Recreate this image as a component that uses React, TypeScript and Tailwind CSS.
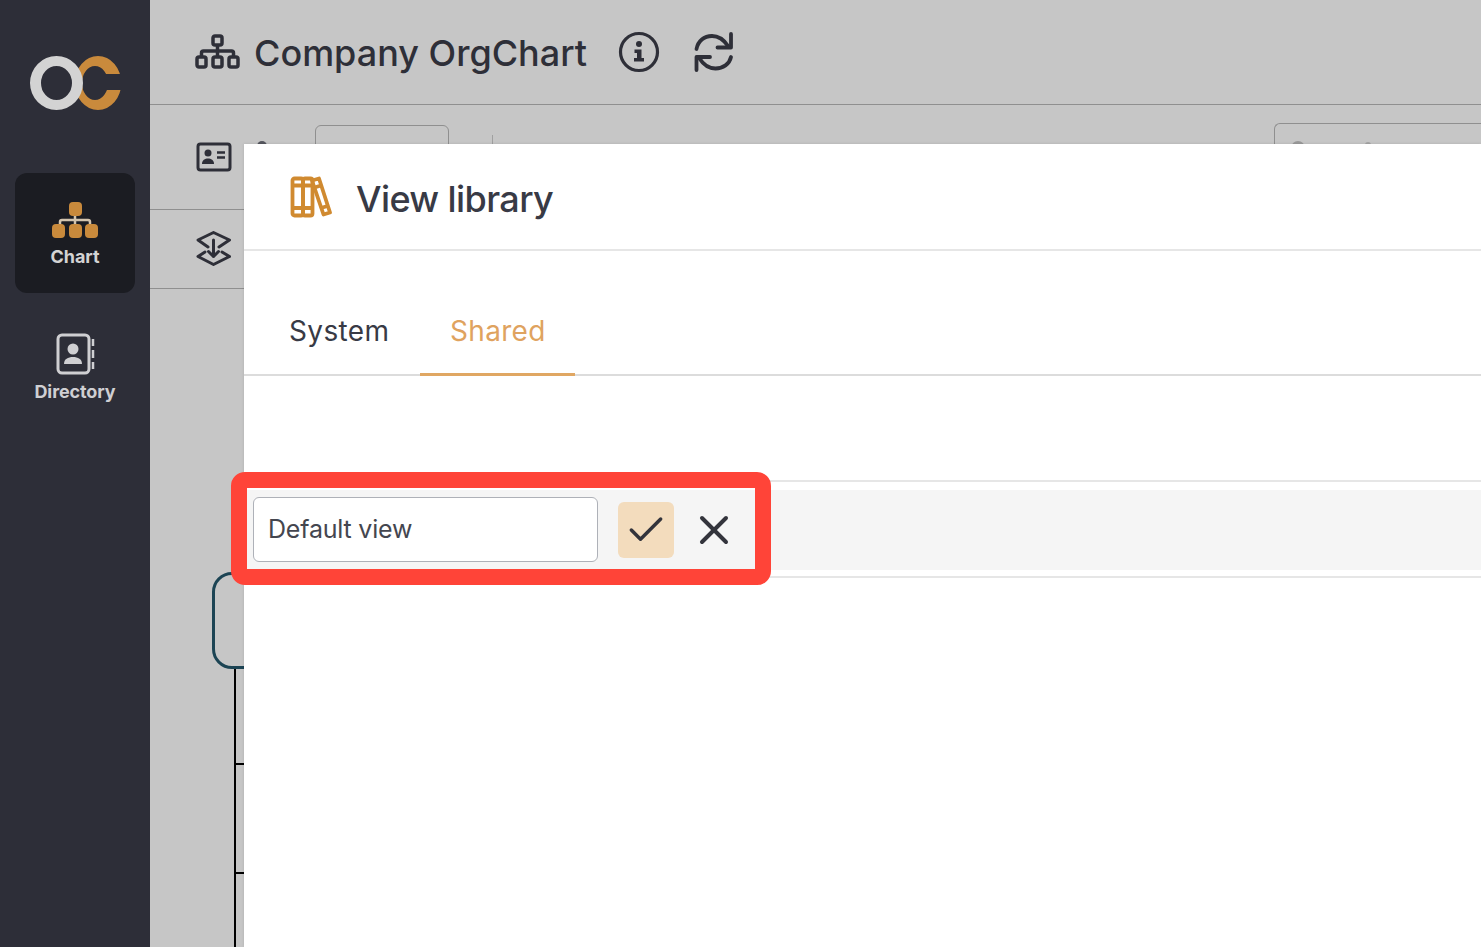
import { Check, X } from 'lucide-react';

// Logo: two ring shapes, drawn by hand
function Logo() {
  return (
    <svg width="92" height="56" viewBox="0 0 92 56" className="block">
      <clipPath id="c-cut">
        <path d="M0 0H92V19H70V35H92V56H0Z" />
      </clipPath>
      <path
        d="M45.700 28A23.300 27 0 1 0 92.300 28A23.300 27 0 1 0 45.700 28ZM53 28A13 17 0 1 1 79 28A13 17 0 1 1 53 28Z"
        fill="#c98a3c"
        fillRule="evenodd"
        clipPath="url(#c-cut)"
      />
      <path
        d="M1 28A26.500 27 0 1 0 54 28A26.500 27 0 1 0 1 28ZM12 28A15.500 17 0 1 1 43 28A15.500 17 0 1 1 12 28Z"
        fill="#d3d3d3"
        fillRule="evenodd"
      />
    </svg>
  );
}

function ChartSolid() {
  return (
    <svg width="46" height="36" viewBox="0 0 46 36" className="block">
      <path d="M23 12V26M8 25V20Q8 18 10 18H36Q38 18 38 20V25" fill="none" stroke="#d3c4ae" strokeWidth="2.5" />
      <rect x="17" y="0" width="13" height="14" rx="4" fill="#c98a3c" />
      <rect x="0" y="22" width="13" height="14" rx="4" fill="#c98a3c" />
      <rect x="17" y="22" width="13" height="14" rx="4" fill="#c98a3c" />
      <rect x="33" y="22" width="13" height="14" rx="4" fill="#c98a3c" />
    </svg>
  );
}

function DirectoryIcon() {
  return (
    <svg width="40" height="42" viewBox="0 0 40 42" className="block">
      <rect x="3" y="2" width="31" height="38" rx="4" fill="none" stroke="#cfcfd2" strokeWidth="3" />
      <circle cx="18" cy="16" r="5.5" fill="#cfcfd2" />
      <path d="M9 31C9 26 13 24 18 24C23 24 27 26 27 31Z" fill="#cfcfd2" />
      <path d="M38 6V13M38 17V25M38 29V36" stroke="#cfcfd2" strokeWidth="2.5" />
    </svg>
  );
}

function SitemapIcon() {
  return (
    <svg width="46" height="36" viewBox="0 0 46 36" className="block" fill="none" stroke="#2e2f38" strokeWidth="3.5">
      <rect x="18" y="2" width="9" height="9" rx="2" />
      <rect x="2" y="23" width="9" height="10" rx="2" />
      <rect x="18" y="23" width="9" height="10" rx="2" />
      <rect x="34" y="23" width="9" height="10" rx="2" />
      <path d="M22.500 11V23M6.500 23V19Q6.500 17 8.500 17H36.500Q38.500 17 38.500 19V23" />
    </svg>
  );
}

function InfoIcon() {
  return (
    <svg width="42" height="42" viewBox="0 0 42 42" className="block">
      <circle cx="21" cy="21" r="18.500" fill="none" stroke="#2e2f38" strokeWidth="3.200" />
      <circle cx="21" cy="13" r="3" fill="#2e2f38" />
      <path d="M16.500 18.500H23.500V27H26V30.500H16V27H19V22H16.500Z" fill="#2e2f38" />
    </svg>
  );
}

function RefreshIcon() {
  return (
    <svg width="40" height="40" viewBox="0 0 40 40" className="block" fill="none" stroke="#2e2f38" strokeWidth="3.800" strokeLinecap="round" strokeLinejoin="round">
      <path d="M2.500 17C4 9 10 4 18 4C25 4 30 8 34 14" />
      <path d="M37 2V15.500H23.500" />
      <path d="M37 25C35.500 32 29 36.500 21.500 36.500C14 36.500 9 32 5.500 26.500" />
      <path d="M2.500 38V25H16" />
    </svg>
  );
}

function IdCardIcon() {
  return (
    <svg width="36" height="30" viewBox="0 0 36 30" className="block">
      <rect x="2" y="2" width="32" height="26" rx="2.500" fill="none" stroke="#2e2f38" strokeWidth="3" />
      <circle cx="12" cy="11" r="3.500" fill="#2e2f38" />
      <path d="M6 22C6 18 9 16.500 12 16.500C15 16.500 18 18 18 22Z" fill="#2e2f38" />
      <path d="M21 10.500H29M21 15.500H29" stroke="#2e2f38" strokeWidth="2.500" />
    </svg>
  );
}

function LayersDownIcon() {
  return (
    <svg width="36" height="36" viewBox="0 0 36 36" className="block" fill="none" stroke="#2e2f38" strokeWidth="3" strokeLinejoin="round" strokeLinecap="round">
      <path d="M12 16L2 9L17.500 1.500L33.500 9L23 16" />
      <path d="M9 21L2 25.500L17.500 33.500L33.500 25.500L26 21" />
      <path d="M17.500 9V25.500M12.500 20.500L17.500 25.500L22.500 20.500" />
    </svg>
  );
}

function BooksIcon() {
  return (
    <svg width="42" height="42" viewBox="0 0 42 42" className="block" fill="none" stroke="#d08a30" strokeWidth="3.800" strokeLinejoin="round">
      <rect x="2.500" y="2.500" width="10.500" height="37" rx="2" />
      <rect x="13" y="2.500" width="9.500" height="37" rx="2" />
      <path d="M2.500 9.500H22.500M2.500 32H22.500" />
      <path d="M22 4.500L29 2.500L40 36.500L33.500 38.500Z" />
      <path d="M24.500 11.500L31 9.500M31 32L37.500 30" />
    </svg>
  );
}

export default function App() {
  return (
    <div className="relative flex h-[947px] w-full overflow-hidden font-['Inter',sans-serif] text-[#2e2f38]">
      {/* Sidebar */}
      <aside className="flex w-[150px] shrink-0 flex-col items-center bg-[#2d2e38] pt-[55px]">
        <Logo />
        <div className="mt-[62px] flex h-[120px] w-[120px] flex-col items-center rounded-xl bg-[#1b1c22] pt-[29px]">
          <ChartSolid />
          <span className="mt-[5px] text-[18px] font-bold leading-[28px] text-[#d3d3d3]">Chart</span>
        </div>
        <div className="mt-10 flex flex-col items-center">
          <DirectoryIcon />
          <span className="mt-[3px] text-[18px] font-bold leading-[28px] tracking-[-0.1px] text-[#cfcfd2]">Directory</span>
        </div>
      </aside>

      {/* Page behind the dialog */}
      <main className="relative min-w-0 flex-1 bg-[#c6c6c6]">
        <header className="flex h-[105px] items-center border-b border-[#8f8f8f] pl-[45px]">
          <SitemapIcon />
          <h1 className="ml-[13px] mt-[2px] text-[36px] font-medium">Company OrgChart</h1>
          <span className="ml-[31px]"><InfoIcon /></span>
          <span className="ml-[34px]"><RefreshIcon /></span>
        </header>
        <div className="flex h-[105px] border-b border-[#8f8f8f] pl-[46px]">
          <div className="mt-[37px]"><IdCardIcon /></div>
          <div className="mt-[36px] ml-[25px] size-[10px] rounded-full bg-[#55565e]" />
          <div className="mt-5 ml-[48px] h-[60px] w-[134px] rounded-md border border-[#8f8f8f]" />
          <div className="mt-[30px] ml-[43px] h-10 w-px bg-[#a0a0a0]" />
          <div className="mt-[18px] ml-auto flex h-[60px] w-[207px] rounded-l-md border border-r-0 border-[#8f8f8f] pl-[16px] pt-[17px]">
            <div className="size-[14px] rounded-full bg-[#9a9a9a]" />
            <div className="ml-[60px] mt-px size-[6px] rounded-full bg-[#a5a5a5]" />
          </div>
        </div>
        <div className="flex h-[79px] items-center border-b border-[#8f8f8f] pl-[46px]">
          <LayersDownIcon />
        </div>

        {/* Org chart canvas peeking out left of the dialog */}
        <div className="absolute left-[62px] top-[572px] h-[97px] w-[60px] rounded-[20px] border-[3px] border-[#1c4454]" />
        <div className="absolute left-[84px] top-[669px] bottom-0 w-[2px] bg-black" />
        <div className="absolute left-[84px] top-[763px] h-[2px] w-[12px] bg-black" />
        <div className="absolute left-[84px] top-[872px] h-[2px] w-[12px] bg-black" />
      </main>

      {/* View library dialog */}
      <section className="absolute bottom-0 left-[244px] right-0 top-[144px] bg-white shadow-[0_0_3px_rgba(0,0,0,0.12)]">
        <div className="flex h-[107px] items-center border-b-2 border-[#e6e6e6] pl-[46px]">
          <BooksIcon />
          <h2 className="ml-[24px] mt-[4px] text-[36px] font-medium tracking-[-0.6px] text-[#383a45]">View library</h2>
        </div>
        <div className="flex h-[125px] items-end border-b-2 border-[#dcdcdc] pl-[45px]">
          <div className="mb-[4px] h-[60px] text-[28px] leading-[42px] tracking-[0.35px] text-[#383a45]">System</div>
          <div className="-mb-[2px] ml-[31px] flex h-[66px] w-[155px] justify-center border-b-[3px] border-[#e0a763] text-[28px] leading-[42px] tracking-[0.3px] text-[#dfa35f]">Shared</div>
        </div>
        <div className="mt-[104px] border-t-2 border-[#e6e6e6] pt-[8px]">
          <div className="flex h-[80px] items-center bg-[#f5f5f5] pl-[9px]">
            <div className="mb-[2px] flex h-[65px] w-[345px] items-center rounded-md border border-[#aeb1b8] bg-white pl-[14px] pt-[2px] text-[25px] tracking-[-0.2px] text-[#44464f]">Default view</div>
            <button className="ml-[20px] mb-[1px] flex h-[56px] w-[56px] items-center justify-center rounded-md bg-[#f3dcbd] text-[#33343c]">
              <Check size={44} strokeWidth={1.9} />
            </button>
            <button className="ml-[12px] mb-[1px] flex h-[56px] w-[56px] items-center justify-center text-[#33343c]">
              <X size={48} strokeWidth={2} />
            </button>
          </div>
          <div className="mt-[6px] h-[2px] bg-[#e6e6e6]" />
        </div>
      </section>

      {/* Red annotation box */}
      <div className="pointer-events-none absolute left-[231px] top-[472px] h-[113px] w-[540px] rounded-[14px] border-[16px] border-[#ff4438]" />
    </div>
  );
}
